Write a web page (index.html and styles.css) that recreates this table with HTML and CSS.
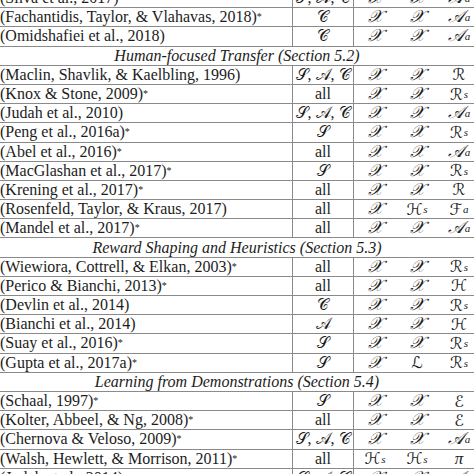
FILE: index.html
```html
<!DOCTYPE html>
<html>
<head>
<meta charset="utf-8">
<link rel="stylesheet" href="styles.css">
</head>
<body>
<div class="table">
  <div class="row"><div class="ref">(Silva et al., 2017)</div><div class="c2">𝒮, 𝒜, 𝒞</div><div class="c">𝒳</div><div class="c">𝒳</div><div class="c">𝒜<sub>a</sub></div></div>
  <div class="row"><div class="ref">(Fachantidis, Taylor, &amp; Vlahavas, 2018)<sup>*</sup></div><div class="c2">𝒞</div><div class="c">𝒳</div><div class="c">𝒳</div><div class="c">𝒜<sub>a</sub></div></div>
  <div class="row"><div class="ref">(Omidshafiei et al., 2018)</div><div class="c2">𝒞</div><div class="c">𝒳</div><div class="c">𝒳</div><div class="c">𝒜<sub>a</sub></div></div>
  <div class="row sec">Human-focused Transfer (Section 5.2)</div>
  <div class="row"><div class="ref">(Maclin, Shavlik, &amp; Kaelbling, 1996)</div><div class="c2">𝒮, 𝒜, 𝒞</div><div class="c">𝒳</div><div class="c">𝒳</div><div class="c"><span class="ll">ℛ</span></div></div>
  <div class="row"><div class="ref">(Knox &amp; Stone, 2009)<sup>*</sup></div><div class="c2">all</div><div class="c">𝒳</div><div class="c">𝒳</div><div class="c"><span class="ll">ℛ</span><sub>s</sub></div></div>
  <div class="row"><div class="ref">(Judah et al., 2010)</div><div class="c2">𝒮, 𝒜, 𝒞</div><div class="c">𝒳</div><div class="c">𝒳</div><div class="c">𝒜<sub>a</sub></div></div>
  <div class="row"><div class="ref">(Peng et al., 2016a)<sup>*</sup></div><div class="c2">𝒮</div><div class="c">𝒳</div><div class="c">𝒳</div><div class="c"><span class="ll">ℛ</span><sub>s</sub></div></div>
  <div class="row"><div class="ref">(Abel et al., 2016)<sup>*</sup></div><div class="c2">all</div><div class="c">𝒳</div><div class="c">𝒳</div><div class="c">𝒜<sub>a</sub></div></div>
  <div class="row"><div class="ref">(MacGlashan et al., 2017)<sup>*</sup></div><div class="c2">𝒮</div><div class="c">𝒳</div><div class="c">𝒳</div><div class="c"><span class="ll">ℛ</span><sub>s</sub></div></div>
  <div class="row"><div class="ref">(Krening et al., 2017)<sup>*</sup></div><div class="c2">all</div><div class="c">𝒳</div><div class="c">𝒳</div><div class="c"><span class="ll">ℛ</span></div></div>
  <div class="row"><div class="ref">(Rosenfeld, Taylor, &amp; Kraus, 2017)</div><div class="c2">all</div><div class="c">𝒳</div><div class="c"><span class="ll">ℋ</span><sub>s</sub></div><div class="c"><span class="ll">ℱ</span><sub>a</sub></div></div>
  <div class="row"><div class="ref">(Mandel et al., 2017)<sup>*</sup></div><div class="c2">all</div><div class="c">𝒳</div><div class="c">𝒳</div><div class="c">𝒜<sub>a</sub></div></div>
  <div class="row sec">Reward Shaping and Heuristics (Section 5.3)</div>
  <div class="row"><div class="ref">(Wiewiora, Cottrell, &amp; Elkan, 2003)<sup>*</sup></div><div class="c2">all</div><div class="c">𝒳</div><div class="c">𝒳</div><div class="c"><span class="ll">ℛ</span><sub>s</sub></div></div>
  <div class="row"><div class="ref">(Perico &amp; Bianchi, 2013)<sup>*</sup></div><div class="c2">all</div><div class="c">𝒳</div><div class="c">𝒳</div><div class="c"><span class="ll">ℋ</span></div></div>
  <div class="row"><div class="ref">(Devlin et al., 2014)</div><div class="c2">𝒞</div><div class="c">𝒳</div><div class="c">𝒳</div><div class="c"><span class="ll">ℛ</span><sub>s</sub></div></div>
  <div class="row"><div class="ref">(Bianchi et al., 2014)</div><div class="c2">𝒜</div><div class="c">𝒳</div><div class="c">𝒳</div><div class="c"><span class="ll">ℋ</span></div></div>
  <div class="row"><div class="ref">(Suay et al., 2016)<sup>*</sup></div><div class="c2">𝒮</div><div class="c">𝒳</div><div class="c">𝒳</div><div class="c"><span class="ll">ℛ</span><sub>s</sub></div></div>
  <div class="row"><div class="ref">(Gupta et al., 2017a)<sup>*</sup></div><div class="c2">𝒮</div><div class="c">𝒳</div><div class="c"><span class="ll">ℒ</span></div><div class="c"><span class="ll">ℛ</span><sub>s</sub></div></div>
  <div class="row sec">Learning from Demonstrations (Section 5.4)</div>
  <div class="row"><div class="ref">(Schaal, 1997)<sup>*</sup></div><div class="c2">𝒮</div><div class="c">𝒳</div><div class="c">𝒳</div><div class="c"><span class="ll">ℰ</span></div></div>
  <div class="row"><div class="ref">(Kolter, Abbeel, &amp; Ng, 2008)<sup>*</sup></div><div class="c2">all</div><div class="c">𝒳</div><div class="c">𝒳</div><div class="c"><span class="ll">ℰ</span></div></div>
  <div class="row"><div class="ref">(Chernova &amp; Veloso, 2009)<sup>*</sup></div><div class="c2">𝒮, 𝒜, 𝒞</div><div class="c">𝒳</div><div class="c">𝒳</div><div class="c">𝒜<sub>a</sub></div></div>
  <div class="row"><div class="ref">(Walsh, Hewlett, &amp; Morrison, 2011)<sup>*</sup></div><div class="c2">all</div><div class="c"><span class="ll">ℋ</span><sub>s</sub></div><div class="c"><span class="ll">ℋ</span><sub>s</sub></div><div class="c">π</div></div>
  <div class="row"><div class="ref">(Judah et al., 2014)</div><div class="c2">𝒮, 𝒜, 𝒞</div><div class="c">𝒳</div><div class="c">𝒳</div><div class="c">𝒜<sub>a</sub></div></div>
</div>
</body>
</html>
```

FILE: styles.css
```css
html, body {
  margin: 0;
  padding: 0;
  background: #fff;
}
body {
  width: 474px;
  height: 474px;
  overflow: hidden;
  font-family: "Liberation Serif", "DejaVu Serif", serif;
  color: #1c1c1c;
  font-size: 16px;
}
.table {
  margin-top: -11px;
  margin-left: -6px;
  width: 486px;
}
.row {
  display: flex;
  height: 19.2px;
  box-sizing: border-box;
  border-bottom: 1px solid #8a8a8a;
  align-items: stretch;
}
.row > div {
  display: flex;
  align-items: center;
  white-space: nowrap;
}
.ref {
  width: 298px;
  padding-left: 6px;
  box-sizing: border-box;
}
.c2 {
  width: 62px;
  justify-content: center;
  border-left: 1px solid #8a8a8a;
  border-right: 1px solid #8a8a8a;
  box-sizing: border-box;
}
.c {
  width: 42px;
  justify-content: center;
  font-style: italic;
  font-size: 17px;
}
.ll {
  font-family: "DejaVu Sans", sans-serif;
  font-style: normal;
  font-size: 16px;
}
.sec {
  justify-content: center;
  align-items: center;
  font-style: italic;
}
sup {
  font-size: 10px;
  vertical-align: 5px;
  line-height: 0;
}
sub {
  font-size: 11px;
  vertical-align: -3px;
  line-height: 0;
  font-style: italic;
  margin-left: 1px;
}
```
